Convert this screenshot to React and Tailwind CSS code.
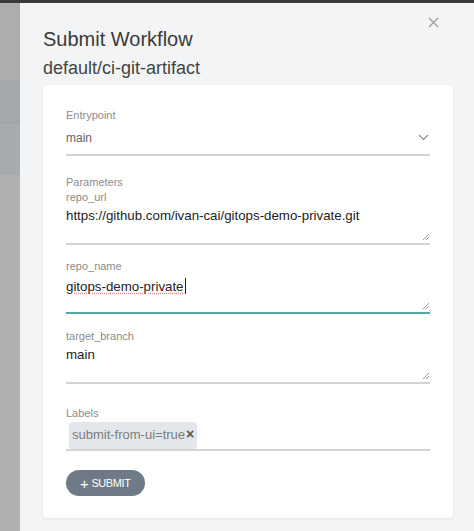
import { useState } from "react";

function ResizeGrip() {
  return (
    <svg className="absolute bottom-[2px] right-0" width="8" height="8" viewBox="0 0 8 8">
      <path d="M7 1L1 7M7 4L4 7" stroke="#9a9a9a" strokeWidth="1" fill="none" />
    </svg>
  );
}

function FieldLabel({ children, className = "" }) {
  return <div className={`text-[11px] leading-[14px] text-[#8c8c8c] ${className}`}>{children}</div>;
}

function TextField({ label, value, focused, cursor, className = "" }) {
  return (
    <div className={className}>
      <FieldLabel>{label}</FieldLabel>
      <div
        className={`relative h-[41px] border-b-2 pt-[2px] text-[13.3px] leading-[20px] text-[#222] ${
          focused ? "border-[#55a8a8]" : "border-[#d4d4d4]"
        }`}
      >
        <span className={focused ? "underline decoration-dotted decoration-[#e08a8a] underline-offset-2" : ""}>
          {value}
        </span>
        {cursor ? <span className="ml-[1px] inline-block h-[16px] w-[1px] translate-y-[3px] bg-[#222]" /> : null}
        <ResizeGrip />
      </div>
    </div>
  );
}

export default function App() {
  const [labels] = useState(["submit-from-ui=true"]);

  return (
    <div className="flex h-[531px] w-[474px] overflow-hidden bg-[#3a3a3a] pt-[3px] font-['Liberation_Sans',Arial,sans-serif]">
      <div className="flex w-[20px] shrink-0 flex-col">
        <div className="h-[77px] bg-[#adadad]" />
        <div className="h-[43px] border-b border-[#9ea2a6] bg-[#a4a8ac]" />
        <div className="h-[52px] bg-[#a8abae]" />
        <div className="flex-1 bg-[#b0b0b0]" />
      </div>

      <div className="relative flex-1 bg-[#f3f4f5] pl-[23px] pr-[21px]">
        <button className="absolute right-[34px] top-[13px] p-[1px]">
          <svg width="11" height="11" viewBox="0 0 11 11">
            <path d="M1 1L10 10M10 1L1 10" stroke="#9b9b9b" strokeWidth="1.2" fill="none" />
          </svg>
        </button>

        <h1 className="pt-[24px] text-[20px] leading-[24px] text-[#3a3a3a]">Submit Workflow</h1>
        <h2 className="mt-[5px] text-[18px] leading-[24px] text-[#444]">default/ci-git-artifact</h2>

        <div className="mt-[5px] rounded-[4px] bg-white px-[23px] pb-[22px] pt-[23px] shadow-[0_1px_3px_rgba(0,0,0,0.08)]">
          <FieldLabel>Entrypoint</FieldLabel>
          <div className="flex h-[34px] items-center justify-between border-b-2 border-[#d4d4d4] pb-[1px] text-[12px] text-[#666]">
            <span>main</span>
            <svg className="mr-[1px]" width="11" height="7" viewBox="0 0 11 7">
              <path d="M1 1L5.5 5.5L10 1" stroke="#8a8a8a" strokeWidth="1.1" fill="none" />
            </svg>
          </div>

          <FieldLabel className="mt-[19px]">Parameters</FieldLabel>
          <TextField className="mt-[1px]" label="repo_url" value="https://github.com/ivan-cai/gitops-demo-private.git" />
          <TextField className="mt-[14px]" label="repo_name" value="gitops-demo-private" focused cursor />
          <TextField className="mt-[15px]" label="target_branch" value="main" />

          <FieldLabel className="mt-[22px]">Labels</FieldLabel>
          <div className="flex h-[31px] items-start border-b-2 border-[#d4d4d4] pl-[3px] pt-[2px]">
            {labels.map((label) => (
              <span
                key={label}
                className="flex h-[26px] items-center rounded-[4px] bg-[#e3e7eb] pl-[3px] pr-[3px] text-[13px] text-[#7d7d7d] shadow-[0_1px_1px_rgba(0,0,0,0.12)]"
              >
                {label}
                <span className="ml-[1px] -translate-y-[1px] text-[14px] font-bold text-[#555]">×</span>
              </span>
            ))}
          </div>

          <button className="mt-[19px] flex h-[26px] items-center rounded-full bg-[#6e7b86] px-[14px] text-[11px] tracking-[-0.4px] text-white">
            <span className="mr-[3px] text-[15px] leading-none">+</span>
            SUBMIT
          </button>
        </div>
      </div>
    </div>
  );
}
